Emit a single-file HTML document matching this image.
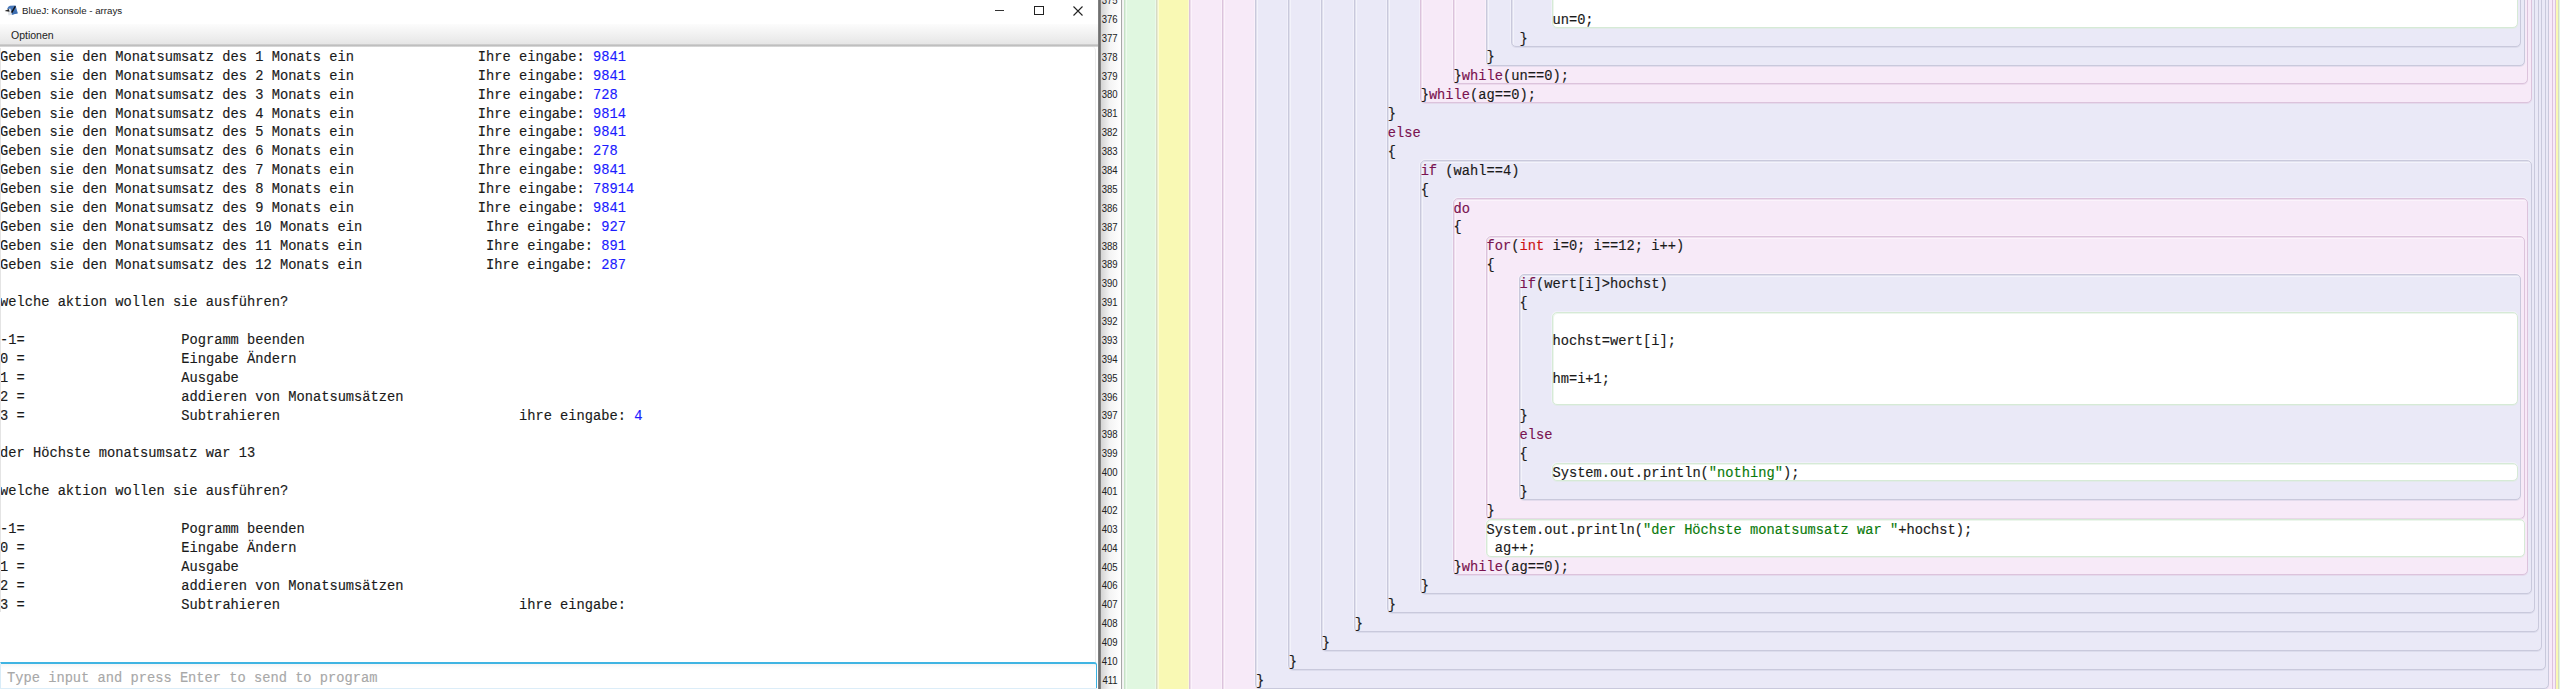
<!DOCTYPE html><html><head><meta charset="utf-8"><style>
*{margin:0;padding:0;box-sizing:border-box}
html,body{width:2560px;height:689px;overflow:hidden;background:#fff}
body{position:relative;font-family:"Liberation Sans",sans-serif}
.a{position:absolute}
.m{position:absolute;font-family:"Liberation Mono",monospace;font-size:13.7269px;line-height:18.885px;white-space:pre;color:#1a1a1a;transform-origin:0 0;-webkit-text-stroke:0.15px currentColor}
.k{color:#7a1350}
.i{color:#cc1010}
.u{color:#1c1cff}
.str{color:#0b7a0b}
.box{position:absolute;border:1px solid;border-radius:5px}
.ln{position:absolute;left:1097px;width:20.6px;text-align:right;font-family:"Liberation Sans",sans-serif;font-size:10.6px;color:#222;line-height:18.885px;transform-origin:100% 0;transform:scaleX(0.9)}
</style></head><body>
<div class="a" style="left:0;top:0;width:1098px;height:24px;background:#fff"></div>
<svg class="a" style="left:0;top:0" width="22" height="22" viewBox="0 0 22 22">
<path d="M7.2 8.8 Q8 6.2 10 5.8 L15.6 5.6 L17.8 13.2 L11.8 14.7 L9 10 Z" fill="#4677ba"/>
<path d="M13.2 8.2 L17.8 13.2 L11.8 14.7 Z" fill="#3d6eb0"/>
<path d="M8.2 9 L10.4 8.6 L11.8 12.3 L11.6 14.8 L8.4 15.6 L7.9 12 Z" fill="#dfe3e8"/>
<path d="M14.7 6 L16 6.5 L12.3 12.9 L10.9 12.3 Z" fill="#121216"/>
<path d="M4.6 10.9 L8.8 9 L9.6 11.7 Z" fill="#262626"/>
</svg>
<div class="a" style="left:22px;top:4px;font-size:9.7px;line-height:14px;color:#1a1a1a;white-space:pre">BlueJ: Konsole - arrays</div>
<div class="a" style="left:995px;top:10px;width:9px;height:1px;background:#333"></div>
<div class="a" style="left:1034px;top:6px;width:9.5px;height:9px;border:1px solid #222"></div>
<svg class="a" style="left:1073px;top:5.5px" width="10" height="10" viewBox="0 0 10 10"><path d="M0.5 0.5 L9.5 9.5 M9.5 0.5 L0.5 9.5" stroke="#222" stroke-width="1.1"/></svg>
<div class="a" style="left:0;top:24px;width:1098px;height:21px;background:linear-gradient(#fcfcfc,#f3f3f3 40%,#e5e5e5)"></div>
<div class="a" style="left:0;top:44px;width:1098px;height:3px;background:linear-gradient(#d4d4d4,#bdbdbd 55%,#e4e4e4)"></div>
<div class="a" style="left:11px;top:27.8px;font-size:10.5px;line-height:14px;color:#222;white-space:pre">Optionen</div>
<div class="a" style="left:0;top:47px;width:1096px;height:616px;background:#fff;border-top-right-radius:4px;border-right:1px solid #ececec"></div>
<div class="m" style="left:0.00px;top:48.90px">Geben sie den Monatsumsatz des 1 Monats ein</div>
<div class="m" style="left:477.78px;top:48.90px">Ihre eingabe: </div>
<div class="m u" style="left:593.10px;top:48.90px">9841</div>
<div class="m" style="left:0.00px;top:67.78px">Geben sie den Monatsumsatz des 2 Monats ein</div>
<div class="m" style="left:477.78px;top:67.78px">Ihre eingabe: </div>
<div class="m u" style="left:593.10px;top:67.78px">9841</div>
<div class="m" style="left:0.00px;top:86.67px">Geben sie den Monatsumsatz des 3 Monats ein</div>
<div class="m" style="left:477.78px;top:86.67px">Ihre eingabe: </div>
<div class="m u" style="left:593.10px;top:86.67px">728</div>
<div class="m" style="left:0.00px;top:105.56px">Geben sie den Monatsumsatz des 4 Monats ein</div>
<div class="m" style="left:477.78px;top:105.56px">Ihre eingabe: </div>
<div class="m u" style="left:593.10px;top:105.56px">9814</div>
<div class="m" style="left:0.00px;top:124.44px">Geben sie den Monatsumsatz des 5 Monats ein</div>
<div class="m" style="left:477.78px;top:124.44px">Ihre eingabe: </div>
<div class="m u" style="left:593.10px;top:124.44px">9841</div>
<div class="m" style="left:0.00px;top:143.33px">Geben sie den Monatsumsatz des 6 Monats ein</div>
<div class="m" style="left:477.78px;top:143.33px">Ihre eingabe: </div>
<div class="m u" style="left:593.10px;top:143.33px">278</div>
<div class="m" style="left:0.00px;top:162.21px">Geben sie den Monatsumsatz des 7 Monats ein</div>
<div class="m" style="left:477.78px;top:162.21px">Ihre eingabe: </div>
<div class="m u" style="left:593.10px;top:162.21px">9841</div>
<div class="m" style="left:0.00px;top:181.10px">Geben sie den Monatsumsatz des 8 Monats ein</div>
<div class="m" style="left:477.78px;top:181.10px">Ihre eingabe: </div>
<div class="m u" style="left:593.10px;top:181.10px">78914</div>
<div class="m" style="left:0.00px;top:199.98px">Geben sie den Monatsumsatz des 9 Monats ein</div>
<div class="m" style="left:477.78px;top:199.98px">Ihre eingabe: </div>
<div class="m u" style="left:593.10px;top:199.98px">9841</div>
<div class="m" style="left:0.00px;top:218.87px">Geben sie den Monatsumsatz des 10 Monats ein</div>
<div class="m" style="left:486.01px;top:218.87px">Ihre eingabe: </div>
<div class="m u" style="left:601.34px;top:218.87px">927</div>
<div class="m" style="left:0.00px;top:237.75px">Geben sie den Monatsumsatz des 11 Monats ein</div>
<div class="m" style="left:486.01px;top:237.75px">Ihre eingabe: </div>
<div class="m u" style="left:601.34px;top:237.75px">891</div>
<div class="m" style="left:0.00px;top:256.63px">Geben sie den Monatsumsatz des 12 Monats ein</div>
<div class="m" style="left:486.01px;top:256.63px">Ihre eingabe: </div>
<div class="m u" style="left:601.34px;top:256.63px">287</div>
<div class="m" style="left:0.00px;top:294.41px">welche aktion wollen sie ausführen?</div>
<div class="m" style="left:0.00px;top:332.18px">-1=</div>
<div class="m" style="left:181.23px;top:332.18px">Pogramm beenden</div>
<div class="m" style="left:0.00px;top:351.06px">0 =</div>
<div class="m" style="left:181.23px;top:351.06px">Eingabe Ändern</div>
<div class="m" style="left:0.00px;top:369.94px">1 =</div>
<div class="m" style="left:181.23px;top:369.94px">Ausgabe</div>
<div class="m" style="left:0.00px;top:388.83px">2 =</div>
<div class="m" style="left:181.23px;top:388.83px">addieren von Monatsumsätzen</div>
<div class="m" style="left:0.00px;top:407.72px">3 =</div>
<div class="m" style="left:181.23px;top:407.72px">Subtrahieren</div>
<div class="m" style="left:518.96px;top:407.72px">ihre eingabe: </div>
<div class="m u" style="left:634.29px;top:407.72px">4</div>
<div class="m" style="left:0.00px;top:445.49px">der Höchste monatsumsatz war 13</div>
<div class="m" style="left:0.00px;top:483.25px">welche aktion wollen sie ausführen?</div>
<div class="m" style="left:0.00px;top:521.03px">-1=</div>
<div class="m" style="left:181.23px;top:521.03px">Pogramm beenden</div>
<div class="m" style="left:0.00px;top:539.91px">0 =</div>
<div class="m" style="left:181.23px;top:539.91px">Eingabe Ändern</div>
<div class="m" style="left:0.00px;top:558.80px">1 =</div>
<div class="m" style="left:181.23px;top:558.80px">Ausgabe</div>
<div class="m" style="left:0.00px;top:577.68px">2 =</div>
<div class="m" style="left:181.23px;top:577.68px">addieren von Monatsumsätzen</div>
<div class="m" style="left:0.00px;top:596.57px">3 =</div>
<div class="m" style="left:181.23px;top:596.57px">Subtrahieren</div>
<div class="m" style="left:518.96px;top:596.57px">ihre eingabe:</div>
<div class="a" style="left:0;top:48px;width:1px;height:564px;background:#e4e4e4"></div>
<div class="a" style="left:0;top:662.4px;width:1097px;height:30px;border-top:2.2px solid #40b4e2;border-left:1.5px solid #d8ecf8;border-right:1.5px solid #3ab2e2;border-top-right-radius:3px;background:linear-gradient(#f4f4f4,#fcfcfc 3px,#fff 6px)"></div>
<div class="a" style="left:0;top:687.6px;width:1097px;height:1.4px;background:#dcedf8"></div>
<div class="m" style="left:7px;top:669.50px;color:#a8a8a8">Type input and press Enter to send to program</div>
<div class="a" style="left:1097.6px;top:0;width:3.4px;height:689px;background:linear-gradient(90deg,#8c8c8c,#6c6c6c 45%,#8a8a8a)"></div>
<div class="a" style="left:1101px;top:0;width:20px;height:689px;background:linear-gradient(90deg,#d4d4d4,#f4f4f4 45%,#fff)"></div>
<div class="a" style="left:1121px;top:0;width:1px;height:689px;background:#a8a8a8"></div>
<div class="a" style="left:1122px;top:0;width:1438px;height:689px;background:#f2f2f2"></div>
<div class="ln" style="top:-9.00px">375</div>
<div class="ln" style="top:9.89px">376</div>
<div class="ln" style="top:28.77px">377</div>
<div class="ln" style="top:47.66px">378</div>
<div class="ln" style="top:66.54px">379</div>
<div class="ln" style="top:85.43px">380</div>
<div class="ln" style="top:104.31px">381</div>
<div class="ln" style="top:123.20px">382</div>
<div class="ln" style="top:142.08px">383</div>
<div class="ln" style="top:160.97px">384</div>
<div class="ln" style="top:179.85px">385</div>
<div class="ln" style="top:198.74px">386</div>
<div class="ln" style="top:217.62px">387</div>
<div class="ln" style="top:236.51px">388</div>
<div class="ln" style="top:255.39px">389</div>
<div class="ln" style="top:274.28px">390</div>
<div class="ln" style="top:293.16px">391</div>
<div class="ln" style="top:312.05px">392</div>
<div class="ln" style="top:330.93px">393</div>
<div class="ln" style="top:349.82px">394</div>
<div class="ln" style="top:368.70px">395</div>
<div class="ln" style="top:387.59px">396</div>
<div class="ln" style="top:406.47px">397</div>
<div class="ln" style="top:425.36px">398</div>
<div class="ln" style="top:444.24px">399</div>
<div class="ln" style="top:463.13px">400</div>
<div class="ln" style="top:482.01px">401</div>
<div class="ln" style="top:500.90px">402</div>
<div class="ln" style="top:519.78px">403</div>
<div class="ln" style="top:538.67px">404</div>
<div class="ln" style="top:557.55px">405</div>
<div class="ln" style="top:576.44px">406</div>
<div class="ln" style="top:595.32px">407</div>
<div class="ln" style="top:614.21px">408</div>
<div class="ln" style="top:633.09px">409</div>
<div class="ln" style="top:651.98px">410</div>
<div class="ln" style="top:670.86px">411</div>
<div class="box" style="left:1124.00px;top:-40.00px;width:1457.00px;height:841.00px;background:#e0f7e0;border-color:#c6e2c6;box-shadow:inset 1px 1px 0 rgba(198,226,198,.45),inset 2px 2px 0 rgba(255,255,255,.45),0 1px 0 rgba(198,226,198,.4),-1px 0 0 rgba(255,255,255,.35),0 -1px 0 rgba(255,255,255,.35)"></div>
<div class="box" style="left:1156.00px;top:-40.00px;width:1403.00px;height:841.00px;background:#f9f9b4;border-color:#d6dac6;box-shadow:inset 1px 1px 0 rgba(214,218,198,.45),inset 2px 2px 0 rgba(255,255,255,.45),0 1px 0 rgba(214,218,198,.4),-1px 0 0 rgba(255,255,255,.35),0 -1px 0 rgba(255,255,255,.35)"></div>
<div class="box" style="left:1189.00px;top:-40.00px;width:1367.00px;height:841.00px;background:#f7eaf8;border-color:#dcc3dc;box-shadow:inset 1px 1px 0 rgba(220,195,220,.45),inset 2px 2px 0 rgba(255,255,255,.45),0 1px 0 rgba(220,195,220,.4),-1px 0 0 rgba(255,255,255,.35),0 -1px 0 rgba(255,255,255,.35)"></div>
<div class="box" style="left:1222.00px;top:-40.00px;width:1331.00px;height:841.00px;background:#f7eaf8;border-color:#dcc3dc;box-shadow:inset 1px 1px 0 rgba(220,195,220,.45),inset 2px 2px 0 rgba(255,255,255,.45),0 1px 0 rgba(220,195,220,.4),-1px 0 0 rgba(255,255,255,.35),0 -1px 0 rgba(255,255,255,.35)"></div>
<div class="box" style="left:1255.00px;top:-40.00px;width:1294.00px;height:728.75px;background:#eae9f7;border-color:#c9c9dc;box-shadow:inset 1px 1px 0 rgba(201,201,220,.45),inset 2px 2px 0 rgba(255,255,255,.45),0 1px 0 rgba(201,201,220,.4),-1px 0 0 rgba(255,255,255,.35),0 -1px 0 rgba(255,255,255,.35)"></div>
<div class="box" style="left:1288.00px;top:-40.00px;width:1258.00px;height:709.86px;background:#eae9f7;border-color:#c9c9dc;box-shadow:inset 1px 1px 0 rgba(201,201,220,.45),inset 2px 2px 0 rgba(255,255,255,.45),0 1px 0 rgba(201,201,220,.4),-1px 0 0 rgba(255,255,255,.35),0 -1px 0 rgba(255,255,255,.35)"></div>
<div class="box" style="left:1321.00px;top:-40.00px;width:1221.00px;height:690.98px;background:#eae9f7;border-color:#c9c9dc;box-shadow:inset 1px 1px 0 rgba(201,201,220,.45),inset 2px 2px 0 rgba(255,255,255,.45),0 1px 0 rgba(201,201,220,.4),-1px 0 0 rgba(255,255,255,.35),0 -1px 0 rgba(255,255,255,.35)"></div>
<div class="box" style="left:1354.00px;top:-40.00px;width:1185.00px;height:672.09px;background:#eae9f7;border-color:#c9c9dc;box-shadow:inset 1px 1px 0 rgba(201,201,220,.45),inset 2px 2px 0 rgba(255,255,255,.45),0 1px 0 rgba(201,201,220,.4),-1px 0 0 rgba(255,255,255,.35),0 -1px 0 rgba(255,255,255,.35)"></div>
<div class="box" style="left:1387.00px;top:-40.00px;width:1148.00px;height:653.21px;background:#eae9f7;border-color:#c9c9dc;box-shadow:inset 1px 1px 0 rgba(201,201,220,.45),inset 2px 2px 0 rgba(255,255,255,.45),0 1px 0 rgba(201,201,220,.4),-1px 0 0 rgba(255,255,255,.35),0 -1px 0 rgba(255,255,255,.35)"></div>
<div class="box" style="left:1420.00px;top:-40.00px;width:1112.00px;height:143.31px;background:#f7eaf8;border-color:#dcc3dc;box-shadow:inset 1px 1px 0 rgba(220,195,220,.45),inset 2px 2px 0 rgba(255,255,255,.45),0 1px 0 rgba(220,195,220,.4),-1px 0 0 rgba(255,255,255,.35),0 -1px 0 rgba(255,255,255,.35)"></div>
<div class="box" style="left:1453.00px;top:-40.00px;width:1075.00px;height:124.43px;background:#f7eaf8;border-color:#dcc3dc;box-shadow:inset 1px 1px 0 rgba(220,195,220,.45),inset 2px 2px 0 rgba(255,255,255,.45),0 1px 0 rgba(220,195,220,.4),-1px 0 0 rgba(255,255,255,.35),0 -1px 0 rgba(255,255,255,.35)"></div>
<div class="box" style="left:1486.00px;top:-40.00px;width:1039.00px;height:105.54px;background:#eae9f7;border-color:#c9c9dc;box-shadow:inset 1px 1px 0 rgba(201,201,220,.45),inset 2px 2px 0 rgba(255,255,255,.45),0 1px 0 rgba(201,201,220,.4),-1px 0 0 rgba(255,255,255,.35),0 -1px 0 rgba(255,255,255,.35)"></div>
<div class="box" style="left:1511.00px;top:-40.00px;width:1010.00px;height:86.66px;background:#eae9f7;border-color:#c9c9dc;box-shadow:inset 1px 1px 0 rgba(201,201,220,.45),inset 2px 2px 0 rgba(255,255,255,.45),0 1px 0 rgba(201,201,220,.4),-1px 0 0 rgba(255,255,255,.35),0 -1px 0 rgba(255,255,255,.35)"></div>
<div class="box" style="left:1552.00px;top:-40.00px;width:966.00px;height:67.77px;background:#ffffff;border-color:#d6ead6;box-shadow:inset 1px 1px 0 rgba(214,234,214,.45),inset 2px 2px 0 rgba(255,255,255,.45),0 1px 0 rgba(214,234,214,.4),-1px 0 0 rgba(255,255,255,.35),0 -1px 0 rgba(255,255,255,.35)"></div>
<div class="box" style="left:1420.00px;top:160.47px;width:1112.00px;height:433.86px;background:#eae9f7;border-color:#c9c9dc;box-shadow:inset 1px 1px 0 rgba(201,201,220,.45),inset 2px 2px 0 rgba(255,255,255,.45),0 1px 0 rgba(201,201,220,.4),-1px 0 0 rgba(255,255,255,.35),0 -1px 0 rgba(255,255,255,.35)"></div>
<div class="box" style="left:1453.00px;top:198.24px;width:1075.00px;height:377.20px;background:#f7eaf8;border-color:#dcc3dc;box-shadow:inset 1px 1px 0 rgba(220,195,220,.45),inset 2px 2px 0 rgba(255,255,255,.45),0 1px 0 rgba(220,195,220,.4),-1px 0 0 rgba(255,255,255,.35),0 -1px 0 rgba(255,255,255,.35)"></div>
<div class="box" style="left:1486.00px;top:236.01px;width:1039.00px;height:282.78px;background:#f7eaf8;border-color:#dcc3dc;box-shadow:inset 1px 1px 0 rgba(220,195,220,.45),inset 2px 2px 0 rgba(255,255,255,.45),0 1px 0 rgba(220,195,220,.4),-1px 0 0 rgba(255,255,255,.35),0 -1px 0 rgba(255,255,255,.35)"></div>
<div class="box" style="left:1519.00px;top:273.78px;width:1002.00px;height:226.12px;background:#eae9f7;border-color:#c9c9dc;box-shadow:inset 1px 1px 0 rgba(201,201,220,.45),inset 2px 2px 0 rgba(255,255,255,.45),0 1px 0 rgba(201,201,220,.4),-1px 0 0 rgba(255,255,255,.35),0 -1px 0 rgba(255,255,255,.35)"></div>
<div class="box" style="left:1552.00px;top:311.55px;width:966.00px;height:93.93px;background:#ffffff;border-color:#d6ead6;box-shadow:inset 1px 1px 0 rgba(214,234,214,.45),inset 2px 2px 0 rgba(255,255,255,.45),0 1px 0 rgba(214,234,214,.4),-1px 0 0 rgba(255,255,255,.35),0 -1px 0 rgba(255,255,255,.35)"></div>
<div class="box" style="left:1552.00px;top:462.63px;width:966.00px;height:18.38px;background:#ffffff;border-color:#d6ead6;box-shadow:inset 1px 1px 0 rgba(214,234,214,.45),inset 2px 2px 0 rgba(255,255,255,.45),0 1px 0 rgba(214,234,214,.4),-1px 0 0 rgba(255,255,255,.35),0 -1px 0 rgba(255,255,255,.35)"></div>
<div class="box" style="left:1486.00px;top:519.28px;width:1039.00px;height:37.27px;background:#ffffff;border-color:#d6ead6;box-shadow:inset 1px 1px 0 rgba(214,234,214,.45),inset 2px 2px 0 rgba(255,255,255,.45),0 1px 0 rgba(214,234,214,.4),-1px 0 0 rgba(255,255,255,.35),0 -1px 0 rgba(255,255,255,.35)"></div>
<div class="m" style="left:1552.45px;top:11.69px">un=0;</div>
<div class="m" style="left:1519.50px;top:30.57px">}</div>
<div class="m" style="left:1486.55px;top:49.45px">}</div>
<div class="m" style="left:1453.60px;top:68.34px">}<span class="k">while</span>(un==0);</div>
<div class="m" style="left:1420.65px;top:87.23px">}<span class="k">while</span>(ag==0);</div>
<div class="m" style="left:1387.70px;top:106.11px">}</div>
<div class="m" style="left:1387.70px;top:125.00px"><span class="k">else</span></div>
<div class="m" style="left:1387.70px;top:143.88px">{</div>
<div class="m" style="left:1420.65px;top:162.77px"><span class="k">if</span> (wahl==4)</div>
<div class="m" style="left:1420.65px;top:181.65px">{</div>
<div class="m" style="left:1453.60px;top:200.54px"><span class="k">do</span></div>
<div class="m" style="left:1453.60px;top:219.42px">{</div>
<div class="m" style="left:1486.55px;top:238.31px"><span class="k">for</span>(<span class="i">int</span> i=0; i==12; i++)</div>
<div class="m" style="left:1486.55px;top:257.19px">{</div>
<div class="m" style="left:1519.50px;top:276.08px"><span class="k">if</span>(wert[i]&gt;hochst)</div>
<div class="m" style="left:1519.50px;top:294.96px">{</div>
<div class="m" style="left:1552.45px;top:332.73px">hochst=wert[i];</div>
<div class="m" style="left:1552.45px;top:370.50px">hm=i+1;</div>
<div class="m" style="left:1519.50px;top:408.27px">}</div>
<div class="m" style="left:1519.50px;top:427.16px"><span class="k">else</span></div>
<div class="m" style="left:1519.50px;top:446.04px">{</div>
<div class="m" style="left:1552.45px;top:464.93px">System.out.println(<span class="str">&quot;nothing&quot;</span>);</div>
<div class="m" style="left:1519.50px;top:483.81px">}</div>
<div class="m" style="left:1486.55px;top:502.70px">}</div>
<div class="m" style="left:1486.55px;top:521.58px">System.out.println(<span class="str">&quot;der Höchste monatsumsatz war &quot;</span>+hochst);</div>
<div class="m" style="left:1486.55px;top:540.47px"> ag++;</div>
<div class="m" style="left:1453.60px;top:559.35px">}<span class="k">while</span>(ag==0);</div>
<div class="m" style="left:1420.65px;top:578.24px">}</div>
<div class="m" style="left:1387.70px;top:597.12px">}</div>
<div class="m" style="left:1354.75px;top:616.00px">}</div>
<div class="m" style="left:1321.80px;top:634.89px">}</div>
<div class="m" style="left:1288.85px;top:653.77px">}</div>
<div class="m" style="left:1255.90px;top:672.66px">}</div>
</body></html>
